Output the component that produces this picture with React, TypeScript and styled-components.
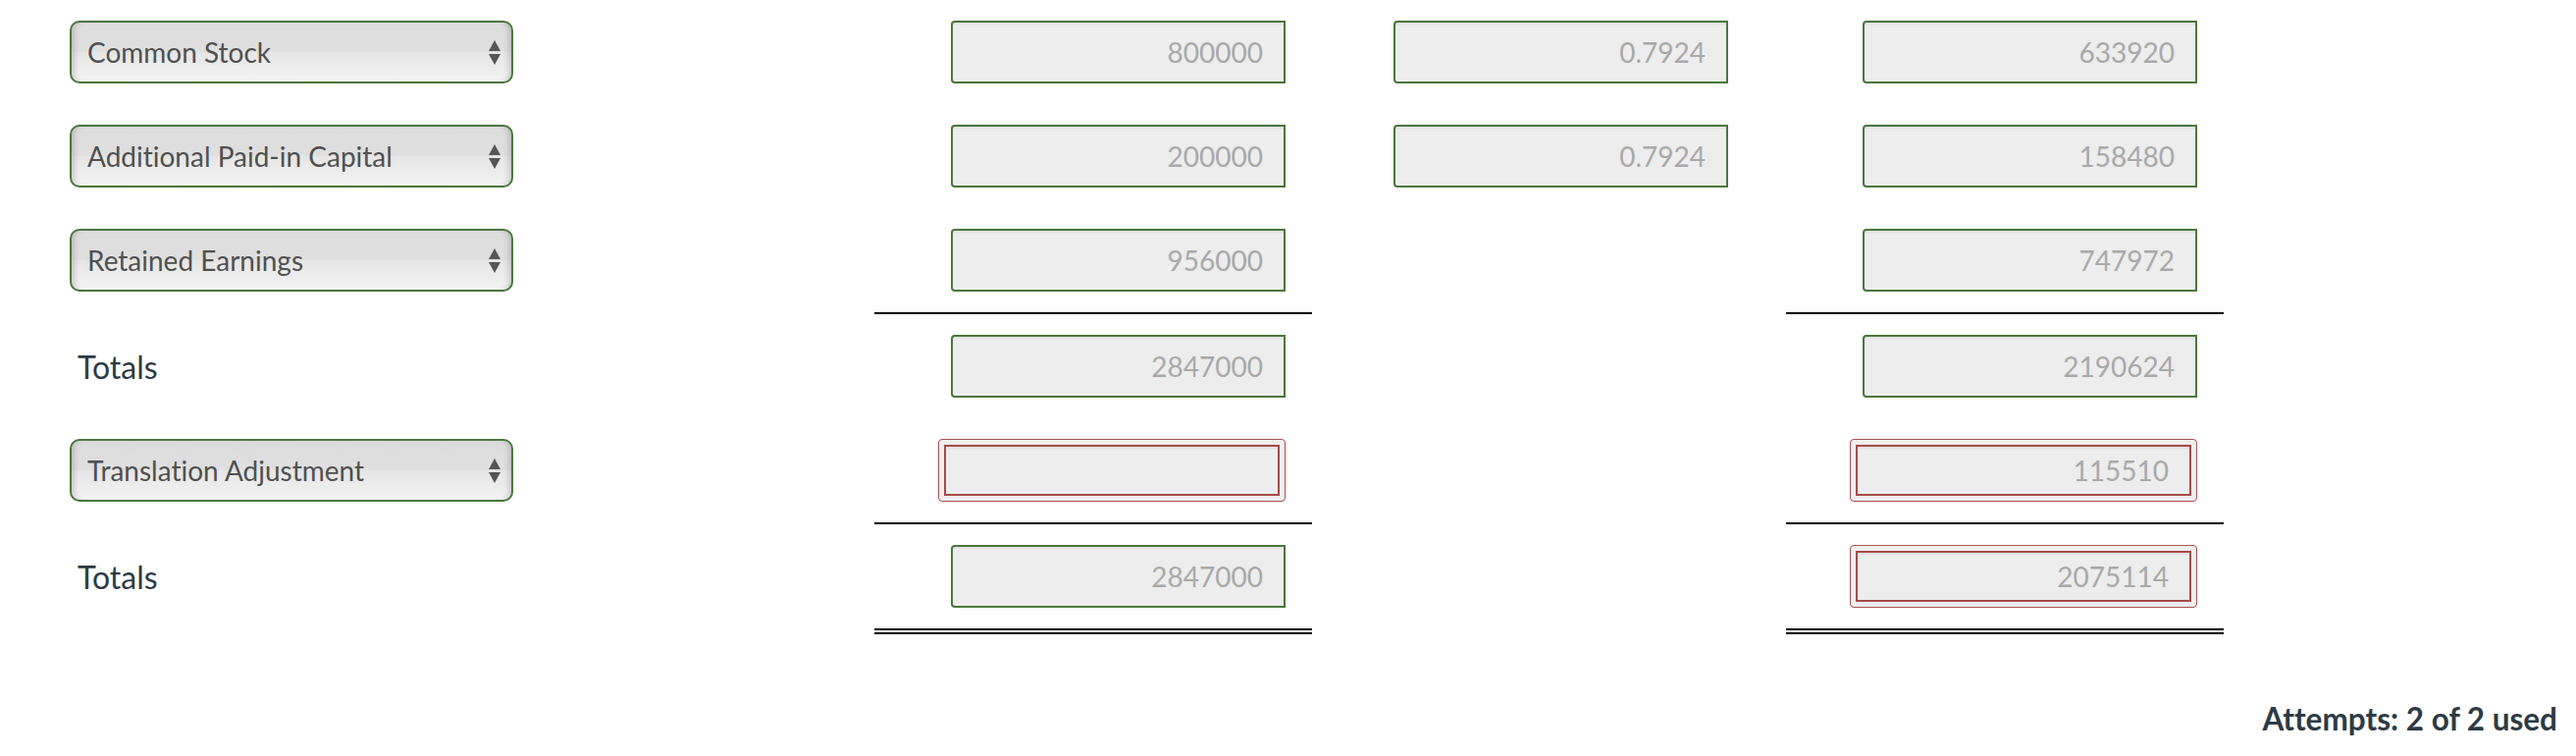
import styled, { createGlobalStyle } from 'styled-components';

type Rule = 'none' | 'single' | 'double';

interface IAmount {
    value?: string
    error?: boolean
}

interface IRow {
    kind: 'select' | 'total'
    label: string
    amount: IAmount
    rate?: IAmount
    translated: IAmount
    rule?: Rule
}

const accounts = [
    'Common Stock',
    'Additional Paid-in Capital',
    'Retained Earnings',
    'Translation Adjustment',
];

const rows: IRow[] = [
    { kind: 'select', label: 'Common Stock', amount: { value: '800000' }, rate: { value: '0.7924' }, translated: { value: '633920' } },
    { kind: 'select', label: 'Additional Paid-in Capital', amount: { value: '200000' }, rate: { value: '0.7924' }, translated: { value: '158480' } },
    { kind: 'select', label: 'Retained Earnings', amount: { value: '956000' }, translated: { value: '747972' }, rule: 'single' },
    { kind: 'total', label: 'Totals', amount: { value: '2847000' }, translated: { value: '2190624' } },
    { kind: 'select', label: 'Translation Adjustment', amount: { value: '', error: true }, translated: { value: '115510', error: true }, rule: 'single' },
    { kind: 'total', label: 'Totals', amount: { value: '2847000' }, translated: { value: '2075114', error: true }, rule: 'double' },
];

const GlobalStyle = createGlobalStyle`
  body {
    margin: 0;
    background: #ffffff;
    font-family: Lato, "Noto Sans", "Liberation Sans", sans-serif;
    font-variant-ligatures: none;
  }
`

const App = () => {
    return <>
        <GlobalStyle />
        <Page>
            <Table>
                {rows.map((row, i) => <TableRow key={i} row={row} />)}
            </Table>
            <Footer>
                <Attempts>Attempts: 2 of 2 used</Attempts>
            </Footer>
        </Page>
    </>
}

const TableRow = ({ row }: { row: IRow }) => {
    const rule = row.rule ?? 'none'
    return <Row>
        <LabelCell>
            {row.kind === 'select'
                ? <AccountSelect value={row.label} />
                : <TotalLabel>{row.label}</TotalLabel>}
        </LabelCell>
        <AmountCell $rule={rule} $inset={27}>
            <AmountField amount={row.amount} />
        </AmountCell>
        <AmountCell $rule="none" $inset={59}>
            {row.rate && <AmountField amount={row.rate} />}
        </AmountCell>
        <AmountCell $rule={rule} $inset={27}>
            <AmountField amount={row.translated} />
        </AmountCell>
    </Row>
}

const AccountSelect = ({ value }: { value: string }) => {
    return <SelectWrap>
        <Select value={value} onChange={() => { }}>
            {accounts.map((a) => <option key={a} value={a}>{a}</option>)}
        </Select>
        <Arrows>
            <ArrowUp />
            <ArrowDown />
        </Arrows>
    </SelectWrap>
}

const AmountField = ({ amount }: { amount: IAmount }) => {
    if (amount.error) {
        return <ErrorWrap>
            <Input $error readOnly value={amount.value ?? ''} />
        </ErrorWrap>
    }
    return <Input readOnly value={amount.value ?? ''} />
}

const Page = styled.div`
  width: 2625px;
`

const Table = styled.div`
  display: flex;
  flex-direction: column;
  padding-left: 71px;
`

const Row = styled.div`
  display: grid;
  grid-template-columns: 820px 446px 483px 446px;
  align-items: stretch;
`

const LabelCell = styled.div`
  padding: 21px 0;
`

const AmountCell = styled.div<{ $rule: Rule, $inset: number }>`
  display: flex;
  justify-content: flex-end;
  align-items: flex-start;
  padding: 21px ${(p) => p.$inset}px 21px 0;
  border-bottom: ${(p) => p.$rule === 'single' ? '2px solid #000' : p.$rule === 'double' ? '6px double #000' : 'none'};
`

const SelectWrap = styled.div`
  position: relative;
  width: 452px;
  height: 64px;
`

const Select = styled.select`
  appearance: none;
  -webkit-appearance: none;
  box-sizing: border-box;
  width: 100%;
  height: 100%;
  margin: 0;
  padding: 0 40px 0 16px;
  border: 2px solid #4a773c;
  border-radius: 10px;
  background: linear-gradient(to bottom, #dcdcdc 0%, #dfdfdf 48%, #e6e6e6 52%, #f3f3f3 100%);
  box-shadow: inset 7px 0 6px -5px rgba(0, 0, 0, 0.18), inset -7px 0 6px -5px rgba(0, 0, 0, 0.18);
  font-family: Lato, "Noto Sans", sans-serif;
  font-size: 28px;
  font-variant-ligatures: none;
  color: #505050;
  outline: none;
`

const Arrows = styled.div`
  position: absolute;
  right: 13px;
  top: 20px;
  display: flex;
  flex-direction: column;
  gap: 3px;
  pointer-events: none;
`

const ArrowUp = styled.div`
  width: 0;
  height: 0;
  border-left: 6.5px solid transparent;
  border-right: 6.5px solid transparent;
  border-bottom: 11px solid #555;
`

const ArrowDown = styled.div`
  width: 0;
  height: 0;
  border-left: 6.5px solid transparent;
  border-right: 6.5px solid transparent;
  border-top: 11px solid #555;
`

const TotalLabel = styled.div`
  height: 64px;
  display: flex;
  align-items: center;
  padding-left: 8px;
  font-size: 32px;
  color: #2d3b45;
`

const ErrorWrap = styled.div`
  box-sizing: border-box;
  width: 354px;
  height: 64px;
  padding: 5px;
  border: 1px solid #a94f4c;
  border-radius: 4px;
  background: #eeeeee;
`

const Input = styled.input<{ $error?: boolean }>`
  box-sizing: border-box;
  width: ${(p) => p.$error ? '100%' : '341px'};
  height: ${(p) => p.$error ? '100%' : '64px'};
  margin: 0;
  padding: 0 21px;
  border: 2px solid ${(p) => p.$error ? '#a64b48' : '#4a773c'};
  border-radius: ${(p) => p.$error ? '0' : '4px 0 0 4px'};
  background: #ededed;
  box-shadow: inset 0 2px 2px rgba(0, 0, 0, 0.05);
  font-family: Lato, "Noto Sans", sans-serif;
  font-size: 28px;
  color: #a9a9a9;
  text-align: right;
  outline: none;
`

const Footer = styled.div`
  display: flex;
  justify-content: flex-end;
  padding: 67px 19px 0 0;
`

const Attempts = styled.div`
  font-size: 31.5px;
  font-weight: 700;
  color: #2d3b45;
`

export default App
